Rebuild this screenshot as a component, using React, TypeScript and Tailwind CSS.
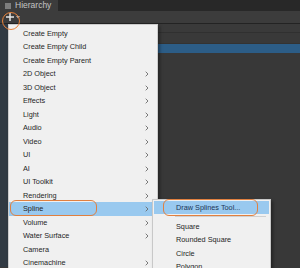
import React from "react";

const Chevron = () => (
  <svg width="4" height="6" viewBox="0 0 4 6" className="shrink-0">
    <polyline points="0.7,0.7 3,3 0.7,5.3" fill="none" stroke="#6b6b6b" strokeWidth="0.9" />
  </svg>
);

const items: { label: string; sub: boolean }[] = [
  { label: "Create Empty", sub: false },
  { label: "Create Empty Child", sub: false },
  { label: "Create Empty Parent", sub: false },
  { label: "2D Object", sub: true },
  { label: "3D Object", sub: true },
  { label: "Effects", sub: true },
  { label: "Light", sub: true },
  { label: "Audio", sub: true },
  { label: "Video", sub: true },
  { label: "UI", sub: true },
  { label: "AI", sub: true },
  { label: "UI Toolkit", sub: true },
  { label: "Rendering", sub: true },
  { label: "Spline", sub: true },
  { label: "Volume", sub: true },
  { label: "Water Surface", sub: true },
  { label: "Camera", sub: false },
  { label: "Cinemachine", sub: true },
];

const subItems = ["Square", "Rounded Square", "Circle", "Polygon"];

export default function App() {
  return (
    <div className="relative w-[300px] h-[268px] overflow-hidden bg-[#383838] font-['Liberation_Sans',sans-serif]">
      {/* tab bar */}
      <div className="flex h-[11px] bg-[#282828]">
        <div className="flex items-center w-[58px] bg-[#3c3c3c] pl-[5px] gap-[4px]">
          <svg width="6" height="6" viewBox="0 0 6 6">
            <rect x="0" y="0.5" width="6" height="1" fill="#bdbdbd" />
            <rect x="0" y="2.5" width="6" height="1" fill="#bdbdbd" />
            <rect x="0" y="4.5" width="6" height="1" fill="#bdbdbd" />
          </svg>
          <span className="text-[8.5px] leading-none text-[#c4c4c4]">Hierarchy</span>
        </div>
      </div>
      {/* toolbar */}
      <div className="flex items-center h-[13px] bg-[#3c3c3c] border-b border-[#232323] pl-[6px] gap-[2px]">
        <svg width="8" height="8" viewBox="0 0 8 8">
          <rect x="3.25" y="0" width="1.5" height="8" fill="#e6e6e6" />
          <rect x="0" y="3.25" width="8" height="1.5" fill="#e6e6e6" />
        </svg>
        <svg width="4" height="3" viewBox="0 0 4 3">
          <polygon points="0,0 4,0 2,2.5" fill="#b5b5b5" />
        </svg>
      </div>
      {/* hierarchy list */}
      <div className="flex h-[243px]">
        <div className="w-[9px] bg-[#313a43]" />
        <div className="flex flex-col flex-1">
          <div className="h-[8px] bg-[#3a3a3a]" />
          <div className="h-px bg-[#303030]" />
          <div className="h-[10px] bg-[#393939]" />
          <div className="h-px bg-[#333333]" />
          <div className="h-[9px] bg-[#2c5d87]" />
          <div className="flex-1 bg-[#383838]" />
        </div>
      </div>

      {/* main dropdown menu */}
      <div className="absolute left-[8px] top-[24px] w-[150px] h-[260px] bg-[#f0f0f0] border border-[#cccccc] pt-[1.75px] shadow-[2px_2px_3px_rgba(0,0,0,0.35)]">
        {items.map((it) => (
          <div
            key={it.label}
            className={
              "flex items-center justify-between h-[13.5px] pl-[14px] pr-[8px] " +
              (it.label === "Spline" ? "bg-[#99c9ef]" : "")
            }
          >
            <span className="text-[7.3px] leading-none text-[#1f1f1f] whitespace-nowrap">{it.label}</span>
            {it.sub && <Chevron />}
          </div>
        ))}
      </div>

      {/* sub menu */}
      <div className="absolute left-[152px] top-[199px] w-[119px] h-[80px] bg-[#f0f0f0] border border-[#c8c8c8] pt-[0.5px] shadow-[2px_2px_3px_rgba(0,0,0,0.35)]">
        <div className="flex items-center h-[13.5px] pl-[22px] mx-[1px] bg-[#99c9ef]">
          <span className="text-[7.3px] leading-none text-[#1c3658] whitespace-nowrap">Draw Splines Tool...</span>
        </div>
        <div className="flex items-center h-[5.5px] pl-[22px] pr-[4px]">
          <div className="h-px flex-1 bg-[#d0d0d0]" />
        </div>
        {subItems.map((s) => (
          <div key={s} className="flex items-center h-[13.5px] pl-[23px]">
            <span className="text-[7.3px] leading-none text-[#1f1f1f] whitespace-nowrap">{s}</span>
          </div>
        ))}
      </div>

      {/* orange annotations */}
      <div className="absolute left-[2px] top-[12px] w-[18px] h-[18px] rounded-full border-[1.5px] border-[#e8823a]" />
      <div className="absolute left-[10px] top-[200px] w-[87px] h-[16px] rounded-[6px] border-[1.5px] border-[#e08040]" />
      <div className="absolute left-[163px] top-[199px] w-[95px] h-[17px] rounded-[6px] border-[1.5px] border-[#e08040]" />
    </div>
  );
}
